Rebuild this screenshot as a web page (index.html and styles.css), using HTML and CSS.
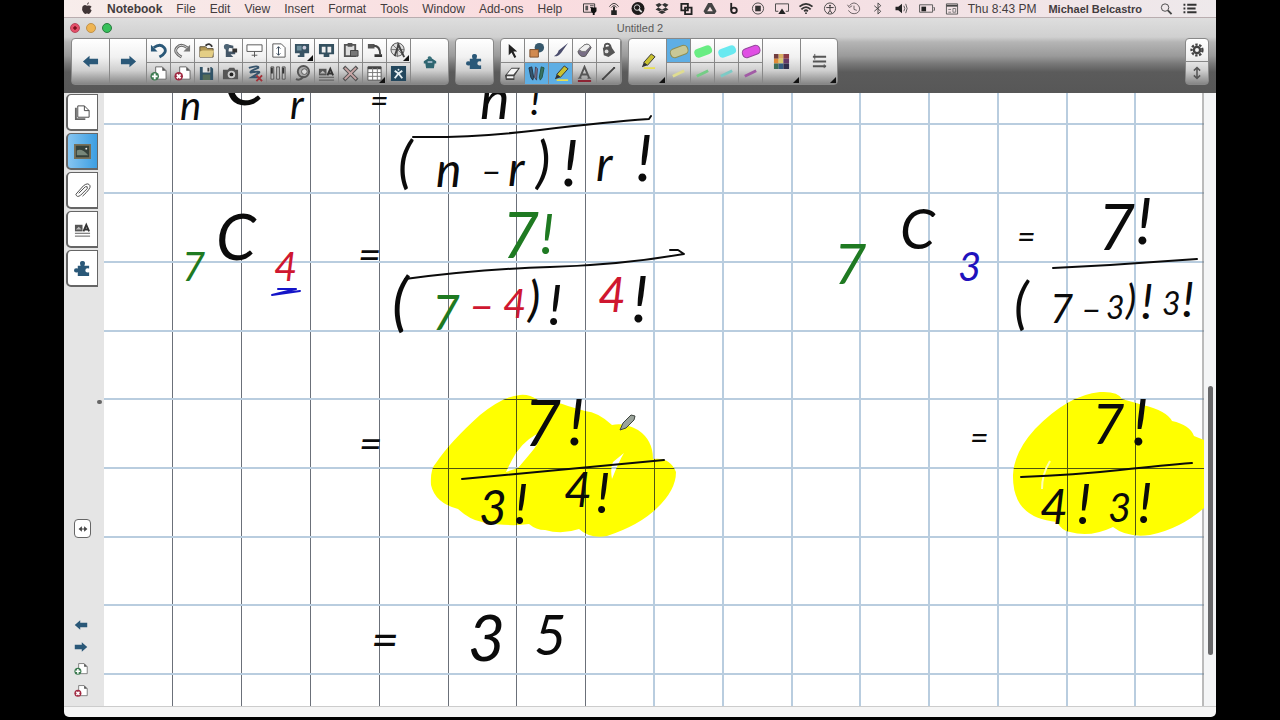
FILE: index.html
```html
<!DOCTYPE html>
<html lang="en">
<head>
<meta charset="utf-8">
<title>Untitled 2</title>
<link rel="stylesheet" href="styles.css">
</head>
<body>
<svg class="defs" aria-hidden="true">
  <symbol id="i-left" viewBox="0 0 18 18"><path d="M1 9L8 3V6H17V12H8V15Z" fill="#2a5878"/></symbol>
  <symbol id="i-right" viewBox="0 0 18 18"><path d="M17 9L10 3V6H1V12H10V15Z" fill="#2a5878"/></symbol>
  <symbol id="i-puzzle" viewBox="0 0 18 18"><path d="M4 6H7Q5 1 9 1T11 6H16V9Q12 8 12 11T16 13V17H4V13Q0 14 0 11T4 9Z" fill="#2a5878"/></symbol>
  <symbol id="i-addpage" viewBox="0 0 18 18"><path d="M6 2H13L17 6V15H6Z" fill="#fff" stroke="#666"/><path d="M13 2V6H17" fill="#555"/><circle cx="5" cy="12" r="4.500" fill="#3c7a50"/><path d="M2 12H8M5 9V15" stroke="#fff" stroke-width="2"/></symbol>
  <symbol id="i-delpage" viewBox="0 0 18 18"><path d="M6 2H13L17 6V15H6Z" fill="#fff" stroke="#666"/><path d="M13 2V6H17" fill="#555"/><circle cx="5" cy="12" r="4.500" fill="#a02840"/><path d="M3 10L7 14M7 10L3 14" stroke="#fff" stroke-width="2"/></symbol>
  <symbol id="i-textlist" viewBox="0 0 18 18"><rect x="1" y="4" width="8" height="7" fill="#555"/><path d="M2 9L5 6L8 9" fill="#bbb"/><path d="M10 11L13 4L16 11M11 9H15" fill="none" stroke="#333" stroke-width="2"/><path d="M1 13H17M1 16H17" stroke="#555"/></symbol>
  <symbol id="i-marker" viewBox="0 0 18 18"><path d="M5 10L13 1L17 4L9 13Z" fill="#c9c12f" stroke="#333"/><path d="M5 10L3 15L9 13" fill="#333"/><path d="M5 16H17" stroke="#e8df50" stroke-width="2"/></symbol>
</svg>

<div class="window">
  <header class="menubar">
    <nav class="menus">
      <svg class="apple" viewBox="0 0 12 14"><path d="M8 0Q6 1 6 3Q8 3 8 0M6 4Q3 2 1 5Q0 8 2 11Q4 14 6 12Q8 14 10 11L11 9Q8 7 11 5Q9 3 6 4" fill="#403536"/></svg>
      <a href="#" class="app-name">Notebook</a><a href="#">File</a><a href="#">Edit</a><a href="#">View</a><a href="#">Insert</a><a href="#">Format</a><a href="#">Tools</a><a href="#">Window</a><a href="#">Add-ons</a><a href="#">Help</a>
    </nav>
    <div class="status">
      <svg viewBox="0 0 16 14"><path d="M1 2H13V11H1Z" fill="none" stroke="#333"/><path d="M3 4H6V9H3Z" fill="#555"/><path d="M8 4H12M8 6H11" stroke="#444"/><path d="M9 6H15V10L13 12V14H11V12L9 10Z" fill="#111"/></svg>
      <svg viewBox="0 0 16 14"><path d="M3 5Q8 -2 13 5M5 6Q8 2 11 6" fill="none" stroke="#333"/><path d="M5 9H11V14H5ZM7 5H9V9H7Z" fill="#222"/></svg>
      <svg viewBox="0 0 16 14"><circle cx="8" cy="7" r="7" fill="#1d1a1a"/><circle cx="7" cy="6" r="3" fill="none" stroke="#ddd"/><path d="M9 8L12 11" stroke="#ddd" stroke-width="2"/></svg>
      <svg viewBox="0 0 16 14"><path d="M1 3L5 1L8 3L11 1L15 3L12 6L15 8L11 10L8 8L5 10L1 8L4 6ZM4 11L8 9L12 11L8 13Z" fill="#333"/><path d="M8 3L4 6L8 8L12 6Z" fill="#f5dfe1"/></svg>
      <svg viewBox="0 0 16 14"><path d="M3 2H10V9H3ZM7 6H14V13H7Z" fill="none" stroke="#222" stroke-width="2"/></svg>
      <svg viewBox="0 0 16 14"><path d="M6 1H10L15 10L13 13H3L1 10Z" fill="#444"/><path d="M8 5L5 10H11Z" fill="#f5dfe1"/></svg>
      <svg viewBox="0 0 16 14"><path d="M5 1V9" stroke="#222" stroke-width="2"/><circle cx="8" cy="9" r="3" fill="none" stroke="#222" stroke-width="2"/></svg>
      <svg viewBox="0 0 16 14"><circle cx="8" cy="7" r="6" fill="none" stroke="#444"/><rect x="5" y="4" width="6" height="6" fill="#333"/></svg>
      <svg viewBox="0 0 16 14"><path d="M4 10H1V2H15V10H12" fill="none" stroke="#444"/><path d="M8 7L12 13H4Z" fill="#222"/></svg>
      <svg viewBox="0 0 16 14"><path d="M1 5Q8 -1 15 5M3 8Q8 3 13 8M6 10Q8 8 10 10" fill="none" stroke="#333" stroke-width="2"/><circle cx="8" cy="12" r="1" fill="#333"/></svg>
      <svg viewBox="0 0 16 14"><circle cx="8" cy="7" r="6" fill="none" stroke="#444"/><circle cx="8" cy="4" r="1" fill="#333"/><path d="M4 6H12M8 6V9L6 12M8 9L10 12" fill="none" stroke="#333"/></svg>
      <svg viewBox="0 0 16 14"><path d="M3 4Q8 -2 13 4Q16 9 11 12Q5 14 2 9M1 3L3 6L6 4M8 4V8L11 9" fill="none" stroke="#665d60"/></svg>
      <svg viewBox="0 0 16 14"><path d="M4 4L11 10L8 13V1L11 4L4 10" fill="none" stroke="#444"/></svg>
      <svg viewBox="0 0 16 14"><path d="M1 5H4L8 2V12L4 9H1Z" fill="#222"/><path d="M10 4Q12 7 10 10M12 2Q15 7 12 12" fill="none" stroke="#555"/></svg>
      <svg class="battery" viewBox="0 0 18 14"><path d="M1 3H15V11H1ZM16 6H17V9H16" fill="none" stroke="#555"/><rect x="3" y="5" width="5" height="5" fill="#222"/></svg>
      <svg viewBox="0 0 16 14"><path d="M2 2H14V13H2Z" fill="none" stroke="#555"/><path d="M2 4H14" stroke="#444" stroke-width="2"/><path d="M4 8H7M4 11H7M9 7H12V11H9Z" fill="none" stroke="#777"/></svg>
      <time>Thu 8:43 PM</time><strong>Michael Belcastro</strong>
      <svg viewBox="0 0 16 14"><circle cx="7" cy="6" r="4" fill="none" stroke="#444"/><path d="M10 9L14 13" stroke="#444" stroke-width="2"/></svg>
      <svg viewBox="0 0 16 14"><path d="M5 3H15M5 7H14M5 11H15" stroke="#333" stroke-width="2"/><path d="M1 3H3M1 7H3M1 11H3" stroke="#333" stroke-width="2"/></svg>
    </div>
  </header>

  <div class="chrome">
    <div class="titlebar">
      <div class="lights"><button class="light close" aria-label="Close"></button><button class="light minimise" aria-label="Minimise"></button><button class="light zoom" aria-label="Zoom"></button></div>
      <h1>Untitled 2</h1>
    </div>
    <div class="toolbar">
      <div class="group">
        <button class="wide" aria-label="Previous page"><svg><use href="#i-left"/></svg></button>
        <button class="wide" aria-label="Next page"><svg><use href="#i-right"/></svg></button>
        <div class="tools eleven">
          <button aria-label="Undo"><svg viewBox="0 0 18 18"><path d="M4 6Q11 1 15 6T10 16" fill="none" stroke="#2a5878" stroke-width="3"/><path d="M1 3V10H8Z" fill="#2a5878"/></svg></button>
          <button aria-label="Redo"><svg viewBox="0 0 18 18"><path d="M14 6Q7 1 3 6T8 16" fill="none" stroke="#666" stroke-width="3"/><path d="M14 6Q7 1 3 6T8 16" fill="none" stroke="#ddd"/><path d="M17 3V10H10Z" fill="#777"/></svg></button>
          <button aria-label="Open"><svg viewBox="0 0 18 18"><path d="M2 5H8L10 7H16V16H2Z" fill="#b49a55" stroke="#5c5138"/><path d="M2 10L5 9H17L15 16H2Z" fill="#e4ce85"/><path d="M8 4Q12 0 15 5" fill="none" stroke="#333" stroke-width="2"/></svg></button>
          <button aria-label="Document camera"><svg viewBox="0 0 18 18"><path d="M4 2L12 4V7L7 6V10H14V13H9L12 16H4Z" fill="#435667"/><path d="M11 7H16V11H11Z" fill="#333"/><circle cx="5" cy="5" r="3" fill="#4d6475"/></svg></button>
          <button aria-label="Screen shade"><svg viewBox="0 0 18 18"><path d="M1 3H17V10H1Z" fill="#fff" stroke="#555"/><path d="M9 10V16M6 14H12" stroke="#555"/></svg></button>
          <button aria-label="Fit page"><svg viewBox="0 0 18 18"><path d="M3 2H12L16 6V16H3Z" fill="#fff" stroke="#555"/><path d="M9 5V14M7 7L9 5L11 7M7 12L9 14L11 12" fill="none" stroke="#345"/></svg></button>
          <button class="more" aria-label="View screens"><svg viewBox="0 0 18 18"><path d="M1 2H16V12H1ZM6 12H11V16H4V14H6Z" fill="#385363"/><path d="M3 4H8V9H3Z" fill="#6e8f9d"/><circle cx="11" cy="6" r="2" fill="#ccd"/></svg></button>
          <button aria-label="Dual page"><svg viewBox="0 0 18 18"><path d="M1 2H17V13H1ZM6 13H12V16H6Z" fill="#34505f"/><path d="M4 5H8V11H4ZM10 5H14V11H10Z" fill="#eee"/></svg></button>
          <button aria-label="Paste"><svg viewBox="0 0 18 18"><path d="M3 3H14V15H3Z" fill="#ddd" stroke="#555" stroke-width="2"/><path d="M6 1H11V5H6Z" fill="#555"/><path d="M9 9H17V15H9Z" fill="#777" stroke="#444"/></svg></button>
          <button aria-label="Capture"><svg viewBox="0 0 18 18"><path d="M2 2H9V7H2Z" fill="#555"/><path d="M8 4Q15 4 15 13" fill="none" stroke="#444" stroke-width="2"/><path d="M9 13H17V16H9Z" fill="#333"/></svg></button>
          <button class="more" aria-label="Measurement tools"><svg viewBox="0 0 18 18"><circle cx="8" cy="8" r="7" fill="#ddd" stroke="#555"/><path d="M8 0V16M1 8H15M3 3L13 13" stroke="#777"/><path d="M5 15L9 3L15 16" fill="none" stroke="#444" stroke-width="2"/></svg></button>
          <button aria-label="Add page"><svg><use href="#i-addpage"/></svg></button>
          <button aria-label="Delete page"><svg><use href="#i-delpage"/></svg></button>
          <button aria-label="Save"><svg viewBox="0 0 18 18"><path d="M2 2H14L16 4V16H2Z" fill="#315367"/><path d="M5 2H13V8H5Z" fill="#e4e4e4"/><path d="M5 10H13V16H5Z" fill="#526b58"/><path d="M10 3H12V7H10Z" fill="#444"/></svg></button>
          <button aria-label="Camera"><svg viewBox="0 0 18 18"><path d="M1 5H6L8 3H13L14 5H17V15H1Z" fill="#555"/><circle cx="10" cy="10" r="4" fill="#ccc"/><circle cx="10" cy="10" r="2" fill="#222"/></svg></button>
          <button aria-label="Clear ink"><svg viewBox="0 0 18 18"><path d="M3 3Q14 0 13 3Q3 7 5 8Q15 6 14 8L6 13L13 13" fill="none" stroke="#36536b" stroke-width="2"/><path d="M11 11L17 17M17 11L11 17" stroke="#a43138" stroke-width="2"/></svg></button>
          <button aria-label="Pens"><svg viewBox="0 0 18 18"><path d="M1 2H4V15H1ZM7 2H10V15H7ZM13 2H16V15H13Z" fill="#bbb" stroke="#555"/><path d="M2 3V9M14 3V9" stroke="#333" stroke-width="2"/></svg></button>
          <button aria-label="Magic pen"><svg viewBox="0 0 18 18"><circle cx="10" cy="7" r="6" fill="#aaa" stroke="#555" stroke-width="2"/><circle cx="11" cy="7" r="3" fill="#ddd" stroke="#555"/><path d="M2 15Q7 17 10 12" fill="none" stroke="#555" stroke-width="2"/></svg></button>
          <button aria-label="Properties"><svg><use href="#i-textlist"/></svg></button>
          <button aria-label="Delete"><svg viewBox="0 0 18 18"><path d="M2 2L16 16M16 2L2 16" stroke="#555" stroke-width="4"/><path d="M3 3L15 15M15 3L3 15" stroke="#c7a4a4" stroke-width="2"/></svg></button>
          <button class="more" aria-label="Table"><svg viewBox="0 0 18 18"><path d="M2 2H16V16H2Z" fill="#fff" stroke="#555"/><path d="M2 3H16" stroke="#444" stroke-width="3"/><path d="M2 8H16M2 12H16M7 3V16M12 3V16" stroke="#777"/></svg></button>
          <button aria-label="Maths tools"><svg viewBox="0 0 18 18"><path d="M2 2H16V16H2Z" fill="#23475d" stroke="#23475d" stroke-width="2"/><path d="M5 14L9 9L13 14M5 6L9 9L13 6" fill="none" stroke="#e4edf0" stroke-width="2"/><circle cx="9" cy="5" r="1" fill="#e4edf0"/></svg></button>
        </div>
        <button class="wide" aria-label="Home"><svg class="small" viewBox="0 0 18 18"><path d="M1 8L9 3L17 8V11H15L14 17H4L3 11H1Z" fill="#2e6570"/><path d="M6 3Q8 0 11 3V6H7Z" fill="#376f79"/><path d="M6 9H12" stroke="#bcd" stroke-width="2"/></svg></button>
      </div>
      <div class="group"><button class="wide" aria-label="Add-ons"><svg><use href="#i-puzzle"/></svg></button></div>
      <div class="group">
        <div class="tools five">
          <button aria-label="Select"><svg viewBox="0 0 18 18"><path d="M5 2L14 10L10 10L13 16L11 17L8 11L5 14Z" fill="#222"/></svg></button>
          <button aria-label="Shapes"><svg viewBox="0 0 18 18"><circle cx="12" cy="6" r="5" fill="#36586c"/><path d="M2 8H11V16H2Z" fill="#d18a50" stroke="#7a4e2b"/></svg></button>
          <button aria-label="Brush"><svg viewBox="0 0 18 18"><path d="M17 1L10 11Q6 16 2 15Q6 13 7 9Z" fill="#4b4d6d"/></svg></button>
          <button aria-label="Solid eraser"><svg viewBox="0 0 18 18"><path d="M2 10L9 3Q14 1 16 6L10 15Q4 17 2 10" fill="#786e85" stroke="#555"/><path d="M3 8L9 3Q14 1 15 5L10 10Q6 11 3 8" fill="#eee" stroke="#777"/></svg></button>
          <button aria-label="Fill"><svg viewBox="0 0 18 18"><path d="M3 6L11 4L16 11L9 16L4 14Z" fill="#555"/><path d="M6 8Q3 1 9 2Q12 4 11 8" fill="none" stroke="#555" stroke-width="2"/><circle cx="7" cy="10" r="2" fill="#ddd"/></svg></button>
          <button aria-label="Eraser"><svg viewBox="0 0 18 18"><path d="M1 11L8 3H17L11 12V16H2Z" fill="#444"/><path d="M3 10L8 4H15L10 10ZM3 12H10V14H3Z" fill="#f5f5f5"/></svg></button>
          <button class="on" aria-label="Pen types"><svg viewBox="0 0 18 18"><path d="M1 3L4 2L6 13L5 16L3 13Z" fill="#34566f" stroke="#234"/><path d="M8 2L10 4L9 16L7 13Z" fill="#7e7290" stroke="#445"/><path d="M14 2L17 3L15 13L13 16L12 13Z" fill="#397360" stroke="#254"/></svg></button>
          <button class="on" aria-label="Highlighter"><svg><use href="#i-marker"/></svg></button>
          <button aria-label="Text"><svg viewBox="0 0 18 18"><path d="M4 14L9 2L14 14M6 10H12" fill="none" stroke="#555" stroke-width="2"/><path d="M2 14H6M12 14H16" stroke="#555"/><path d="M2 17H16" stroke="#8c2434" stroke-width="2"/></svg></button>
          <button aria-label="Line"><svg viewBox="0 0 18 18"><path d="M3 15L15 3" stroke="#444" stroke-width="2"/><path d="M2 14H4V16H2ZM14 2H16V4H14Z" fill="#444"/></svg></button>
        </div>
      </div>
      <div class="group">
        <button class="wide more" aria-label="Highlighter style"><svg><use href="#i-marker"/></svg></button>
        <div class="tools four">
          <button class="on" aria-label="Yellow, thick"><svg class="swatch"><use href="#capsule" fill="#c8c896" stroke="#8d8e55"/></svg></button>
          <button aria-label="Green, thick"><svg class="swatch"><use href="#capsule" fill="#68ed83"/></svg></button>
          <button aria-label="Cyan, thick"><svg class="swatch"><use href="#capsule" fill="#69e9f0"/></svg></button>
          <button aria-label="Magenta, thick"><svg class="swatch"><use href="#capsule" fill="#e04fe4" stroke="#93489b"/></svg></button>
          <button aria-label="Yellow, thin"><svg viewBox="0 0 18 18"><path d="M3 12L15 6" stroke="#dfdc91" stroke-width="3"/></svg></button>
          <button aria-label="Green, thin"><svg viewBox="0 0 18 18"><path d="M3 12L15 6" stroke="#75cd86" stroke-width="3"/></svg></button>
          <button aria-label="Cyan, thin"><svg viewBox="0 0 18 18"><path d="M3 12L15 6" stroke="#7dcac5" stroke-width="3"/></svg></button>
          <button aria-label="Magenta, thin"><svg viewBox="0 0 18 18"><path d="M3 12L15 6" stroke="#a15ba5" stroke-width="3"/></svg></button>
        </div>
        <button class="wide more" aria-label="Colours"><svg viewBox="0 0 18 18"><path d="M1 1H6V6H1Z" fill="#713d3f"/><path d="M6 1H11V6H6Z" fill="#d8ad61"/><path d="M11 1H17V6H11Z" fill="#8b3946"/><path d="M1 6H6V11H1Z" fill="#de8a37"/><path d="M6 6H11V11H6Z" fill="#d9ca72"/><path d="M11 6H17V11H11Z" fill="#663a68"/><path d="M1 11H6V17H1Z" fill="#3d6e59"/><path d="M6 11H11V17H6Z" fill="#345b82"/><path d="M11 11H17V17H11Z" fill="#302f4c"/></svg></button>
        <button class="wide more" aria-label="Line style"><svg viewBox="0 0 18 18"><path d="M2 4H16M2 9H16M2 14H16" stroke="#555" stroke-width="2"/><path d="M4 1V7M14 12V16" stroke="#555"/></svg></button>
      </div>
      <div class="group settings">
        <button aria-label="Settings"><svg viewBox="0 0 18 18"><circle cx="9" cy="9" r="7" fill="none" stroke="#444" stroke-width="3" stroke-dasharray="3 2"/><circle cx="9" cy="9" r="4" fill="none" stroke="#444" stroke-width="3"/></svg></button>
        <button aria-label="Move toolbar"><svg viewBox="0 0 18 18"><path d="M9 3V15M5 6L9 2L13 6M5 12L9 16L13 12" fill="none" stroke="#555" stroke-width="2"/></svg></button>
      </div>
    </div>
  </div>

  <main class="workspace">
    <aside class="side">
      <button class="tab" aria-label="Page sorter"><svg viewBox="0 0 18 18"><path d="M2 4V16H12" fill="none" stroke="#666" stroke-width="2"/><path d="M4 2H11L16 7V14H4Z" fill="#fff" stroke="#444"/><path d="M11 2V7H16" fill="none" stroke="#444"/></svg></button>
      <button class="tab on" aria-label="Gallery"><svg viewBox="0 0 18 18"><path d="M1 2H17V16H1Z" fill="#35413b" stroke="#76705a" stroke-width="2"/><path d="M3 8Q8 5 15 13H3Z" fill="#77877a"/><circle cx="13" cy="6" r="1" fill="#eee"/></svg></button>
      <button class="tab" aria-label="Attachments"><svg viewBox="0 0 18 18"><path d="M5 12L12 5Q15 4 14 7L7 14Q3 17 2 13L10 4Q15 0 17 4Q18 7 9 15" fill="none" stroke="#444"/></svg></button>
      <button class="tab" aria-label="Properties"><svg><use href="#i-textlist"/></svg></button>
      <button class="tab" aria-label="Add-ons"><svg><use href="#i-puzzle"/></svg></button>
      <button class="expand" aria-label="Resize sidebar"><svg viewBox="0 0 18 18"><path d="M1 9L7 4V8H11V4L17 9L11 14V10H7V14Z" fill="#444"/></svg></button>
      <div class="page-nav">
        <button aria-label="Back"><svg><use href="#i-left"/></svg></button>
        <button aria-label="Forward"><svg><use href="#i-right"/></svg></button>
        <button aria-label="Add page"><svg><use href="#i-addpage"/></svg></button>
        <button aria-label="Delete page"><svg><use href="#i-delpage"/></svg></button>
      </div>
      <span class="handle"></span>
    </aside>
    <section class="sheet">
      <svg class="board" viewBox="104 93 1100 613" preserveAspectRatio="xMinYMin meet" role="img" aria-label="Combination worked example on squared paper">
        <defs>
          <symbol id="capsule" viewBox="0 0 22 18"><rect x="2" y="5" width="18" height="9" rx="4" transform="rotate(-20 11 9)"/></symbol>
          <path id="grid-v-left" d="M172 93V706M241 93V706M310 93V706M379 93V706M448 93V706M516 93V706M585 93V706"/>
          <path id="grid-v-right" d="M654 93V706M723 93V706M792 93V706M860 93V706M929 93V706M998 93V706M1067 93V706M1135 93V706"/>
          <path id="grid-h" d="M104 124H1204M104 193H1204M104 262H1204M104 331H1204M104 399H1204M104 468H1204M104 537H1204M104 605H1204M104 674H1204"/>
          <path id="blobs" d="M431 485Q430 469 436 463Q450 442 480 415Q504 396 520 395Q529 394 538 400Q556 401 568 406L585 411Q598 412 612 425Q624 422 638 430Q653 440 653 459Q670 457 676 472Q676 490 657 508Q640 525 607 536Q590 539 579 529Q562 535 545 530Q536 530 529 524Q510 527 482 522Q470 520 458 509Q435 503 431 485M506 472Q510 463 516 453Q528 436 543 432Q539 444 529 455L518 468ZM624 453Q619 461 612 479Q610 468 613 462ZM1013 475Q1014 452 1035 429Q1068 395 1100 392Q1118 391 1122 399L1143 405Q1167 411 1172 421Q1190 425 1194 436L1204 440V508Q1180 529 1150 535Q1127 538 1113 527Q1090 538 1070 532Q1062 531 1057 522Q1012 518 1013 475"/>
          <clipPath id="highlighted"><use href="#blobs" clip-rule="evenodd"/></clipPath>
        </defs>
        <g class="grid"><use href="#grid-v-left" class="dark-line"/><use href="#grid-v-right"/><use href="#grid-h"/></g>
        <path class="edge" d="M1203 93V706"/>
        <use href="#blobs" class="highlight"/>
        <g class="grid over" clip-path="url(#highlighted)"><use href="#grid-v-left"/><use href="#grid-v-right"/><use href="#grid-h"/></g>
        <path class="streak" d="M1050 461Q1042 474 1042 489"/>

        <g class="ink">
          <text class="t40" x="180" y="120">n</text><text class="t64" x="224" y="105">C</text><text class="t40" x="290" y="119">r</text><text class="t32" x="370" y="112">=</text>
          <text class="t56" x="480" y="119">n</text><text class="t40" x="530" y="115">!</text>
          <path d="M413 137Q474 138 540 130T649 119L651 116"/>
          <text class="t56" x="398" y="182">(</text><text class="t48" x="436" y="187">n</text><text class="t32" x="482" y="184">−</text><text class="t48" x="508" y="186">r</text><text class="t56" x="536" y="182">)</text><text class="t64" x="562" y="186">!</text><text class="t48" x="596" y="181">r</text><text class="t64" x="636" y="181">!</text>

          <text class="t40 green" x="182" y="281">7</text><text class="t64" x="216" y="260">C</text><text class="t40 red" x="274" y="281">4</text><path class="blue" d="M278 289H296L272 295L300 291"/><text class="t40" x="358" y="269">=</text>
          <text class="t64 green" x="502" y="258">7</text><text class="t56 green" x="540" y="254">!</text>
          <path d="M405 279Q480 269 550 267T684 254L678 250L670 250"/>
          <text class="t64" x="392" y="324">(</text><text class="t48 green" x="432" y="330">7</text><text class="t40 red" x="470" y="321">−</text><text class="t40 red" x="503" y="318">4</text><text class="t48" x="528" y="316">)</text><text class="t56" x="548" y="325">!</text><text class="t48 red" x="598" y="312">4</text><text class="t64" x="632" y="322">!</text>

          <text class="t56 green" x="834" y="284">7</text><text class="t56" x="900" y="249">C</text><text class="t40 blue" x="958" y="281">3</text><text class="t32" x="1017" y="248">=</text>
          <text class="t64" x="1098" y="250">7</text><text class="t64" x="1136" y="244">!</text><path d="M1053 268L1110 265L1197 259"/>
          <text class="t56" x="1014" y="323">(</text><text class="t40" x="1050" y="323">7</text><text class="t32" x="1082" y="322">−</text><text class="t32" x="1106" y="319">3</text><text class="t40" x="1126" y="314">)</text><text class="t48" x="1141" y="319">!</text><text class="t32" x="1162" y="315">3</text><text class="t48" x="1182" y="317">!</text>

          <text class="t40" x="359" y="458">=</text><text class="t64" x="524" y="446">7</text><text class="t64" x="568" y="445">!</text><path d="M462 479L664 460"/>
          <text class="t48" x="479" y="525">3</text><text class="t56" x="514" y="524">!</text><text class="t48" x="564" y="507">4</text><text class="t56" x="596" y="513">!</text>
          <text class="t32" x="970" y="449">=</text><text class="t56" x="1092" y="444">7</text><text class="t64" x="1132" y="445">!</text><path d="M1021 477Q1075 475 1120 470T1192 463"/>
          <text class="t48" x="1040" y="524">4</text><text class="t56" x="1077" y="524">!</text><text class="t40" x="1108" y="522">3</text><text class="t56" x="1138" y="523">!</text>
          <text class="t48" x="371" y="657">=</text><text class="t64" x="468" y="661">3</text><text class="t56" x="534" y="655">5</text>
        </g>
        <path class="cursor" d="M620 430L623 423L631 415L635 416L634 420L626 428Z"/>
      </svg>
    </section>
    <div class="scroll"><span class="thumb"></span></div>
  </main>
  <footer class="bottom"></footer>
</div>
</body>
</html>
```

FILE: styles.css
```css
* { box-sizing: border-box; }
body { margin: 0; background: #000; font-family: "Liberation Sans", Arial, sans-serif; }
button { border: 0; padding: 0; margin: 0; background: none; font: inherit; display: flex; align-items: center; justify-content: center; }
svg { display: block; }
.defs { position: absolute; width: 0; height: 0; }
.window { display: flex; flex-direction: column; height: 100vh; padding: 0 5% 3px; }

.menubar { display: flex; flex: none; justify-content: space-between; align-items: center; height: 18px; background: linear-gradient(90deg, #f7edeb, #fadcdf 40%, #f5dfe3 65%, #eee9eb); border-bottom: 1px solid #b9adaf; color: #433c3e; font-size: 12px; white-space: nowrap; }
.menus { display: flex; align-items: center; gap: 14px; padding-left: 17px; }
.menus a { color: inherit; text-decoration: none; }
.menus .app-name { font-weight: 700; }
.apple { width: 12px; height: 13px; }
.status { display: flex; align-items: center; gap: 8px; padding-right: 18px; }
.status svg { width: 16px; height: 13px; }
.status .battery { width: 18px; }
.status strong { margin: 0 8px 0 4px; font-size: 11px; }

.chrome { flex: none; background: linear-gradient(#dedede, #d0d0d0 19px, #b5b5b5 24px, #9a9a9a 38px, #777 46px, #5b5b5b 54px, #575757); }
.titlebar { display: grid; grid-template-columns: 1fr auto 1fr; align-items: center; height: 19px; }
.titlebar h1 { margin: 0; font-size: 11px; font-weight: 400; color: #5a5a5a; }
.lights { display: flex; gap: 6px; padding-left: 6px; }
.light { width: 10px; height: 10px; border: 1px solid; border-radius: 50%; }
.close { background: radial-gradient(#7c0f1e 25%, #e4506a 35%); border-color: #b84458; }
.minimise { background: #efb552; border-color: #c0924c; }
.zoom { background: #36c05a; border-color: #2b7c40; }

.toolbar { display: flex; gap: 6px; height: 56px; padding: 1px 7px 8px; }
.group { display: flex; border: 1px solid #888; border-radius: 4px; background: linear-gradient(#fff, #f1f1f1 40%, #cfcfcf 70%, #858585); overflow: hidden; }
.group button { position: relative; }
.group svg { width: 17px; height: 17px; }
.group .small { width: 14px; height: 14px; }
.group .swatch { width: 22px; height: 18px; }
.wide { width: 37px; }
.wide + .wide { border-left: 1px solid #888; }
.tools { display: grid; grid-template-rows: 24px 22px; border-left: 1px solid #888; }
.tools:first-child { border-left: 0; }
.eleven { grid-template-columns: repeat(11, 24px); }
.five { grid-template-columns: repeat(5, 24px); }
.four { grid-template-columns: repeat(4, 24px); }
.tools button { border-right: 1px solid #888; border-bottom: 1px solid #888; }
.group .on { background: #5eaee4; }
.more::after { content: ""; position: absolute; right: 1px; bottom: 1px; border: 3px solid #111; border-top-color: transparent; border-left-color: transparent; }
.settings { flex-direction: column; width: 24px; margin-left: auto; }
.settings button { flex: 1; }
.settings button + button { border-top: 1px solid #888; }
.settings svg { width: 14px; height: 14px; }

.workspace { display: flex; flex: 1; min-height: 0; background: #f4f5f6; }
.side { position: relative; flex: none; display: flex; flex-direction: column; gap: 2px; width: 40px; padding: 1px 2px 8px; background: #e5e5e5; }
.tab { flex: none; width: 32px; height: 37px; background: #fff; border: 1px solid #666; border-width: 1px 1px 2px 2px; border-radius: 5px 0 0 5px; }
.tab.on { background: linear-gradient(90deg, #86c5f1, #3c9ee2); }
.tab svg { width: 17px; height: 17px; }
.expand { width: 17px; height: 19px; margin: auto 0 0 8px; background: #fff; border: 1px solid #666; border-radius: 4px; }
.expand svg { width: 10px; height: 10px; }
.page-nav { display: flex; flex-direction: column; gap: 8px; margin: 78px 0 0 8px; }
.page-nav svg { width: 14px; height: 14px; }
.page-nav button { width: 14px; height: 14px; }
.handle { position: absolute; right: 2px; top: 50%; width: 5px; height: 4px; border-radius: 2px; background: #666; }
.sheet { flex: 1; min-width: 0; background: #fff; }
.board { width: 100%; height: 100%; }
.grid { fill: none; stroke: #b9cddf; stroke-width: 2; shape-rendering: crispEdges; }
.dark-line { stroke: #6b7079; stroke-width: 1; }
.grid.over { stroke: #4f5510; stroke-width: 1; }
.edge { stroke: #777; stroke-width: 1; }
.highlight { fill: #ff0; fill-rule: evenodd; }
.streak { fill: none; stroke: #ffffb5; stroke-width: 2; }
.cursor { fill: #9aa39a; stroke: #3e443e; stroke-width: 1; }
.ink { font-family: Lato, "Liberation Sans", sans-serif; font-style: italic; fill: #0b0b0b; }
.ink path { fill: none; stroke: #0b0b0b; stroke-width: 2; stroke-linecap: round; stroke-linejoin: round; }
.ink .green { fill: #1f7a22; }
.ink .red { fill: #cf1730; }
.ink .blue { fill: #1f12bd; }
.ink path.blue { fill: none; stroke: #1414c8; }
.t32 { font-size: 32px; }
.t40 { font-size: 40px; }
.t48 { font-size: 48px; }
.t56 { font-size: 56px; }
.t64 { font-size: 64px; }
.scroll { flex: none; display: flex; flex-direction: column; align-items: center; width: 12px; padding-top: 293px; padding-bottom: 51px; }
.thumb { flex: 1; width: 5px; border-radius: 3px; background: #68686a; }
.bottom { flex: none; height: 11px; background: #f5f5f5; border-top: 1px solid #ccc; border-radius: 0 0 5px 5px; }
```
